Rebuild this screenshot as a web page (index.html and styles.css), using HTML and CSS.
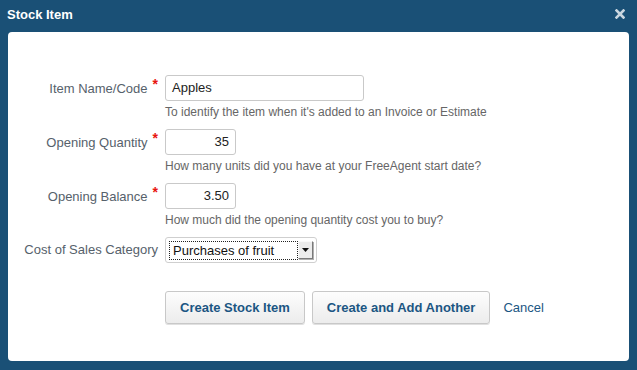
FILE: index.html
```html
<!DOCTYPE html>
<html>
<head>
<meta charset="utf-8">
<link rel="stylesheet" href="styles.css">
</head>
<body>
<div class="dialog">
  <div class="titlebar">
    <span class="title">Stock Item</span>
    <svg class="close" width="10" height="10" viewBox="0 0 10 10"><path d="M1.5 1.5 L8.5 8.5 M8.5 1.5 L1.5 8.5" stroke="#c9d6e0" stroke-width="2.6" stroke-linecap="square"/></svg>
  </div>
  <div class="panel">
    <div class="form">
      <div class="label">Item Name/Code<span class="req">*</span></div>
      <div class="field">
        <div class="input wide">Apples</div>
        <div class="help">To identify the item when it's added to an Invoice or Estimate</div>
      </div>
      <div class="label">Opening Quantity<span class="req">*</span></div>
      <div class="field">
        <div class="input num">35</div>
        <div class="help">How many units did you have at your FreeAgent start date?</div>
      </div>
      <div class="label">Opening Balance<span class="req">*</span></div>
      <div class="field">
        <div class="input num">3.50</div>
        <div class="help">How much did the opening quantity cost you to buy?</div>
      </div>
      <div class="label">Cost of Sales Category</div>
      <div class="field">
        <div class="select">
          <span class="sel-text">Purchases of fruit</span>
          <span class="sel-btn"><svg width="7" height="4" viewBox="0 0 7 4"><path d="M0 0 H7 L3.5 4 Z" fill="#111"/></svg></span>
        </div>
      </div>
      <div></div>
      <div class="actions">
        <button class="btn">Create Stock Item</button>
        <button class="btn">Create and Add Another</button>
        <a class="cancel">Cancel</a>
      </div>
    </div>
  </div>
</div>
</body>
</html>
```
FILE: styles.css
```css
html, body {
  margin: 0;
  padding: 0;
  background: #1a5076;
}
body {
  font-family: "Liberation Sans", Arial, Helvetica, sans-serif;
  width: 637px;
  height: 370px;
  overflow: hidden;
}
.dialog {
  padding: 0 8px;
}
.titlebar {
  height: 32px;
  display: flex;
  align-items: center;
  justify-content: space-between;
}
.title {
  color: #fff;
  font-weight: bold;
  font-size: 13px;
  margin-left: -1px;
  margin-top: -4px;
}
.close {
  margin-right: 4px;
  margin-top: -4px;
}
.panel {
  background: #fff;
  border-radius: 4px;
  height: 329px;
  box-sizing: border-box;
  padding-top: 43px;
}
.form {
  display: grid;
  grid-template-columns: 150px auto;
  column-gap: 7px;
  align-items: start;
}
.label {
  text-align: right;
  font-size: 13px;
  color: #56616b;
  line-height: 26px;
  height: 26px;
  white-space: nowrap;
}
.req {
  color: #e8140f;
  font-weight: bold;
  font-size: 14px;
  margin-left: 5px;
  position: relative;
  top: -4px;
}
.field {
  margin-bottom: 9px;
}
.input {
  box-sizing: border-box;
  height: 26px;
  border: 1px solid #c9c9c9;
  border-radius: 3px;
  font-size: 13px;
  line-height: 24px;
  color: #222;
  padding: 0 6px;
}
.input.wide {
  width: 199px;
}
.input.num {
  width: 71px;
  text-align: right;
}
.help {
  font-size: 12px;
  color: #666;
  margin-top: 3px;
  line-height: 16px;
}
.select {
  box-sizing: border-box;
  width: 152px;
  height: 26px;
  border: 1px solid #cfcfcf;
  border-radius: 3px;
  display: flex;
  align-items: center;
  padding: 0 2px 0 3px;
}
.sel-text {
  box-sizing: border-box;
  flex: 1;
  height: 19px;
  border: 1px dotted #222;
  font-size: 13px;
  line-height: 17px;
  color: #111;
  padding-left: 3px;
}
.sel-btn {
  box-sizing: border-box;
  width: 15px;
  height: 18px;
  background: #ececec;
  border: 1px solid;
  border-color: #fafafa #7a7a7a #7a7a7a #fafafa;
  box-shadow: 1px 1px 0 #b0b0b0;
  display: flex;
  align-items: center;
  justify-content: center;
  margin-right: 1px;
}
.actions {
  display: flex;
  align-items: center;
  gap: 7px;
  margin-top: 19px;
}
.btn {
  font-family: "Liberation Sans", Arial, Helvetica, sans-serif;
  font-size: 13px;
  font-weight: bold;
  color: #1b5683;
  height: 33px;
  padding: 0 14px;
  border: 1px solid #c8c8c8;
  border-radius: 3px;
  background: linear-gradient(#fdfdfd, #ececec);
  box-shadow: 0 1px 0 #e0e0e0;
}
.cancel {
  font-size: 13px;
  color: #1b5683;
  margin-left: 6px;
}
```
